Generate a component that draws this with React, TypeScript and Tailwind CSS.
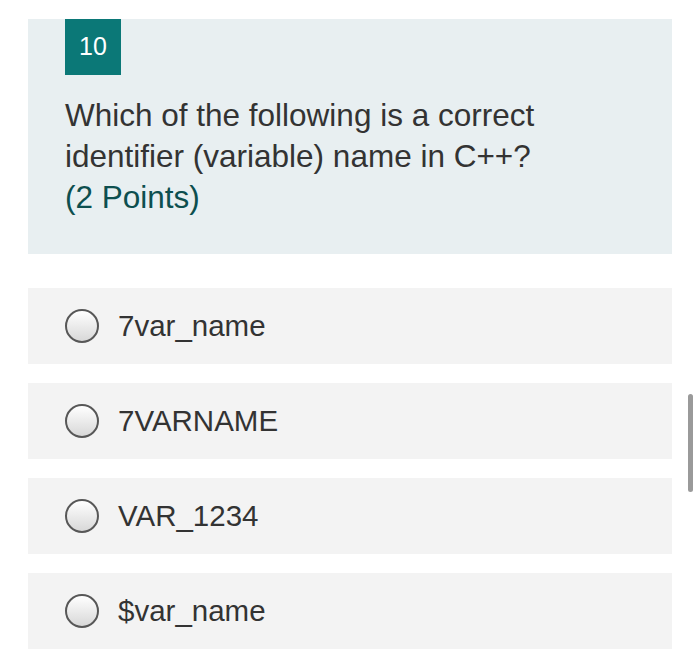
import React from 'react';

const options = ['7var_name', '7VARNAME', 'VAR_1234', '$var_name'];

function Radio() {
  return (
    <span className="w-[34px] h-[34px] rounded-full border-2 border-[#575757] bg-gradient-to-b from-white to-[#d8d8d8] shrink-0" />
  );
}

export default function App() {
  return (
    <div className="relative w-[700px] h-[666px] bg-white overflow-hidden font-['Liberation_Sans',Arial,sans-serif]">
      {/* Question card */}
      <div className="mx-[28px] mt-[19px] bg-[#e8eff1] pl-[37px] pr-6 pb-[36px]">
        <div className="w-[56px] h-[56px] bg-[#0b7877] text-white text-[25px] flex items-center justify-center">
          10
        </div>
        <div className="mt-[20px] text-[31.5px] leading-[41px] text-[#333]">
          <p>Which of the following is a correct identifier (variable) name in C++?</p>
          <p className="text-[#0d4f4f]">(2 Points)</p>
        </div>
      </div>

      {/* Options */}
      <div className="mx-[28px] mt-[34px] flex flex-col gap-[19px]">
        {options.map((o) => (
          <div key={o} className="h-[76px] bg-[#f3f3f3] flex items-center pl-[37px] gap-[19px]">
            <Radio />
            <span className="text-[29.5px] text-[#333]">{o}</span>
          </div>
        ))}
      </div>

      {/* Scroll indicator */}
      <div className="absolute left-[688px] top-[394px] w-[5px] h-[98px] rounded-full bg-[#9a9a9a]" />
    </div>
  );
}
